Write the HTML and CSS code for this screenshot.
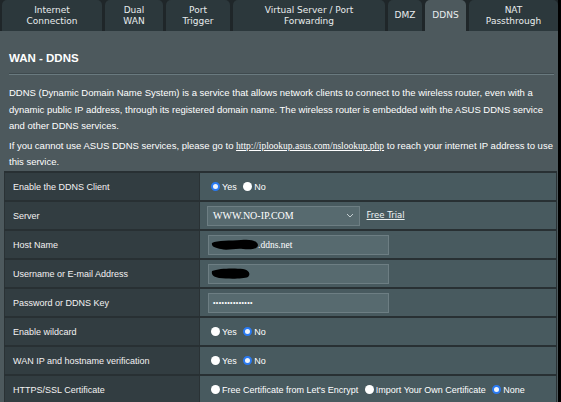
FILE: index.html
```html
<!DOCTYPE html>
<html lang="en">
<head>
    <meta charset="UTF-8">
    <title>WAN - DDNS</title>
    <link rel="stylesheet" href="styles.css">
</head>
<body>

<div class="page">
    <!-- tab row -->
    <ul class="tabs">
        <li class="tab tab_inet">Internet<br>Connection</li>
        <li class="tab tab_dual">Dual<br>WAN</li>
        <li class="tab tab_port">Port<br>Trigger</li>
        <li class="tab tab_vs">Virtual Server / Port<br>Forwarding</li>
        <li class="tab tab_dmz">DMZ</li>
        <li class="tab tab_ddns active">DDNS</li>
        <li class="tab tab_nat">NAT<br>Passthrough</li>
    </ul>

    <div class="panel">
        <div class="title">WAN - DDNS</div>
        <div class="split_line"></div>

        <div class="desc">
            <p class="desc_first">DDNS (Dynamic Domain Name System) is a service that allows network clients to connect to the wireless router, even with a dynamic public IP address, through its registered domain name. The wireless router is embedded with the ASUS DDNS service and other DDNS services.</p>
            <p>If you cannot use ASUS DDNS services, please go to <a class="desc_link" href="#">http://iplookup.asus.com/nslookup.php</a> to reach your internet IP address to use this service.</p>
        </div>

        <table class="form_table">
            <tr>
                <th>Enable the DDNS Client</th>
                <td class="radio_cell">
                    <span class="radio checked"></span><span class="radio_text">Yes</span>
                    <span class="radio"></span><span class="radio_text">No</span>
                </td>
            </tr>
            <tr>
                <th>Server</th>
                <td>
                    <span class="select_box">WWW.NO-IP.COM
                        <svg class="select_arrow" width="8" height="5" viewBox="0 0 8 5"><path d="M1 1 L4 4 L7 1" fill="none" stroke="#c4ced1" stroke-width="1"/></svg>
                    </span>
                    <a class="trial_link" href="#">Free Trial</a>
                </td>
            </tr>
            <tr>
                <th>Host Name</th>
                <td>
                    <span class="input_box">
                        <svg class="blot" width="48" height="14" viewBox="0 0 48 14"><path d="M1 5 C6 2 20 3 30 2 C38 1 46 2 47 7 C47 11 40 12 32 11 C24 10 16 13 10 11 C5 10 0 9 1 5 Z" fill="#000"/></svg><span class="input_text">.ddns.net</span>
                    </span>
                </td>
            </tr>
            <tr>
                <th>Username or E-mail Address</th>
                <td>
                    <span class="input_box">
                        <svg class="blot" width="40" height="13" viewBox="0 0 40 13"><path d="M1 4 C8 1 24 1 32 2 C38 3 40 7 37 10 C32 12 18 12 8 11 C3 10 0 8 1 4 Z" fill="#000"/></svg>
                    </span>
                </td>
            </tr>
            <tr>
                <th>Password or DDNS Key</th>
                <td>
                    <span class="input_box"><span class="pass_text">••••••••••••••</span></span>
                </td>
            </tr>
            <tr>
                <th>Enable wildcard</th>
                <td class="radio_cell">
                    <span class="radio"></span><span class="radio_text">Yes</span>
                    <span class="radio checked"></span><span class="radio_text">No</span>
                </td>
            </tr>
            <tr>
                <th>WAN IP and hostname verification</th>
                <td class="radio_cell">
                    <span class="radio"></span><span class="radio_text">Yes</span>
                    <span class="radio checked"></span><span class="radio_text">No</span>
                </td>
            </tr>
            <tr>
                <th>HTTPS/SSL Certificate</th>
                <td class="radio_cell">
                    <span class="radio"></span><span class="radio_text">Free Certificate from Let's Encrypt</span>
                    <span class="radio"></span><span class="radio_text">Import Your Own Certificate</span>
                    <span class="radio checked"></span><span class="radio_text">None</span>
                </td>
            </tr>
        </table>
    </div>
</div>

</body>
</html>
```

FILE: styles.css
```css
body{
    margin: 0;
    background: #000;
    font-family: "Liberation Sans", Arial, sans-serif;
    color: #fff;
}
.page{
    width: 558px;
    background: #1f2629;
    height: 402px;
    overflow: hidden;
}

/* tabs */
.tabs{
    list-style: none;
    margin: 0;
    padding: 0 0 0 2px;
    display: flex;
    gap: 3px;
    height: 31px;
}
.tab{
    height: 31px;
    box-sizing: border-box;
    background: #2c383c;
    border-radius: 5px 5px 0 0;
    display: flex;
    align-items: center;
    justify-content: center;
    text-align: center;
    font-family: "DejaVu Sans", Verdana, sans-serif;
    font-size: 9px;
    line-height: 10.5px;
    color: #e8eced;
}
.tab_inet{ width: 100px; }
.tab_dual{ width: 58px; }
.tab_port{ width: 64px; }
.tab_vs{ width: 152px; }
.tab_dmz{ width: 34px; }
.tab_ddns{ width: 41px; }
.tab_nat{ width: 89px; }
.tab.active{
    background: #4d595d;
}

/* panel */
.panel{
    background: #4d595d;
    padding: 0 1px 0 4px;
    height: 371px;
}
.title{
    font-weight: bold;
    font-size: 11.5px;
    padding: 21px 0 0 5px;
    height: 21px;
}
.split_line{
    margin: 0 3px 0 5px;
    height: 1px;
    background: #6a7a7f;
    border-top: 1px solid #3f4a4e;
}
.desc{
    padding: 10px 0 0 5px;
    font-size: 9.5px;
    line-height: 16.5px;
    height: 86px;
}
.desc p{
    margin: 0;
}
.desc .desc_first{
    margin-bottom: 3px;
}
.desc_link{
    color: #fff;
    font-family: "Liberation Serif", "Times New Roman", serif;
}

/* form table */
.form_table{
    width: 553px;
    border-collapse: collapse;
    border: 1px solid #2a3235;
}
.form_table th,
.form_table td{
    height: 27px;
    padding: 0;
    border: 2px solid #283033;
    border-left: none;
    border-right: none;
    font-size: 9px;
}
.form_table th{
    width: 186px;
    background: #323d41;
    text-align: left;
    font-weight: normal;
    padding-left: 8px;
    color: #f2f2f2;
    border-right: 1px solid #2a3235;
}
.form_table td{
    background: #485a5f;
    padding-left: 6px;
}
.form_table td.radio_cell{
    padding-left: 11px;
}

.radio{
    display: inline-block;
    width: 9px;
    height: 9px;
    border-radius: 50%;
    background: #fff;
    vertical-align: -1px;
    box-sizing: border-box;
}
.radio.checked{
    background: #eef3fb;
    border: 2.5px solid #2a7af2;
}
.radio_text{
    margin: 0 4px 0 2px;
}

.select_box{
    display: inline-flex;
    align-items: center;
    justify-content: space-between;
    width: 153px;
    height: 20px;
    box-sizing: border-box;
    padding: 0 5px 0 5px;
    margin-left: 1px;
    background: #576a6f;
    border: 1px solid #6d7e83;
    font-family: "Liberation Serif", "Times New Roman", serif;
    font-size: 10px;
    vertical-align: middle;
}
.trial_link{
    font-family: "DejaVu Sans", Verdana, sans-serif;
    font-size: 8.5px;
    color: #eef2f3;
    margin-left: 4px;
}

.input_box{
    display: flex;
    align-items: center;
    width: 181px;
    height: 20px;
    box-sizing: border-box;
    padding-left: 2px;
    margin-left: 2px;
    background: #576a6f;
    border: 1px solid #6d7e83;
}
.blot{
    display: block;
}
.input_text{
    font-family: "Liberation Serif", "Times New Roman", serif;
    font-size: 9.5px;
    margin-left: -1px;
}
.pass_text{
    font-size: 7px;
    letter-spacing: 0.4px;
    padding-left: 2px;
}
```
